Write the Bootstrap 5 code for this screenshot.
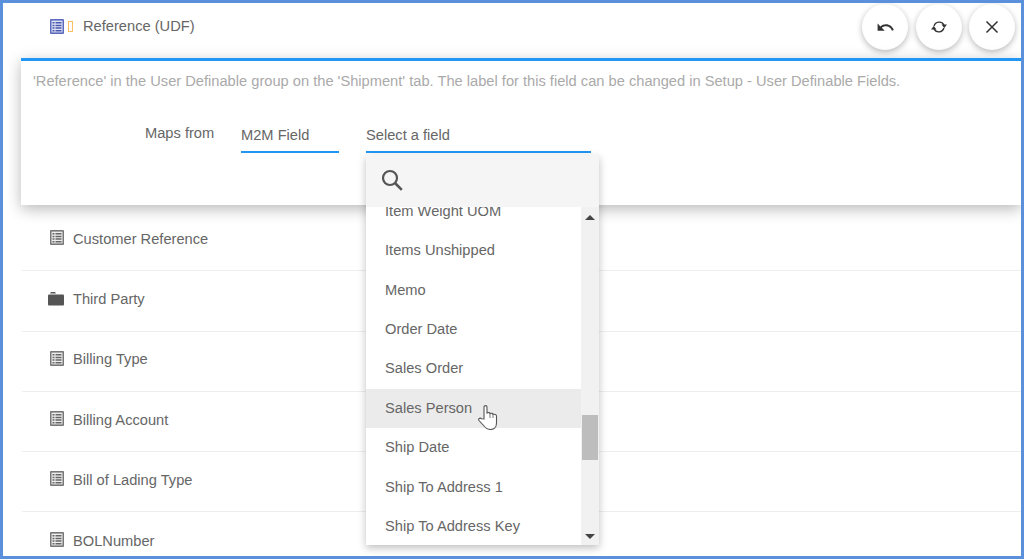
<!DOCTYPE html>
<html lang="en"><head><meta charset="utf-8"><title>Field mapping</title>
<link href="https://cdn.jsdelivr.net/npm/bootstrap@5.3.0/dist/css/bootstrap.min.css" rel="stylesheet">
<style>
html,body{height:100%;margin:0}
body{font-family:"Liberation Sans",Arial,sans-serif;font-size:14.67px;color:#666;background:#fff}
.frame{height:559px;border:3px solid #5b90dc;position:relative;overflow:hidden}
.head-row{height:55px;padding-left:47px;padding-right:6px}
.head-label{margin-top:-9px}
.ico{width:14px;height:15px;flex:none;margin-top:-2px}
.ico-main{margin-right:2px;margin-top:-9px}
.tiny-box{width:5px;height:11px;border:1px solid #fbbf63;margin:-8px 10px 0 2px;flex:none}
.round-btn{width:46px;height:46px;border-radius:50%;background:#fff;box-shadow:0 2px 6px rgba(0,0,0,.28);border:0;padding:0;margin-left:7.500px;margin-top:-7px}
.detail{margin-left:18px;height:147px;border-top:3px solid #2196f3;background:#fff;box-shadow:0 4px 14px rgba(0,0,0,.28);padding:9px 12px;position:relative;z-index:2;color:#aaa}
.map-line{margin-top:30px;margin-left:112px;color:#666}
.maps-lbl{width:96px}
.fld-a{width:98px;height:31px;border-bottom:2px solid #2196f3;margin-right:27px;padding-top:2px}
.fld-b{width:225px;height:31px;border-bottom:2px solid #2196f3;padding-top:2px}
.rows{margin-left:19px;margin-top:6px}
.row-item{height:60.3px;border-bottom:1px solid #eee;padding-left:28px;padding-bottom:4px;gap:9px}
.row-item:last-child{border-bottom:0}
.ico-folder{width:16px;height:15px;margin-left:-2px;margin-right:0;margin-top:0}
.picker{position:absolute;left:363px;top:152px;width:233px;height:390px;background:#fff;box-shadow:0 3px 8px rgba(0,0,0,.25);z-index:3;overflow:hidden}
.pick-search{height:52px;background:#f5f5f5;padding-left:15px;position:relative;z-index:1}
.pick-search svg{margin-top:-3px}
.pick-body{height:338px}
.pick-list{flex:1;overflow:hidden}
.pick-item{height:39.45px;padding-left:19px;padding-bottom:1px;flex:none}
.pick-item:first-child{margin-top:-15.5px}
.pick-item.hot{background:#ebebeb}
.bar{width:18px;background:#f1f1f1;position:relative;flex:none}
.arr{position:absolute;left:4px;width:0;height:0;border-left:5px solid transparent;border-right:5px solid transparent}
.arr-up{top:8px;border-bottom:5px solid #444}
.arr-dn{bottom:6px;border-top:5px solid #444}
.thumb{position:absolute;left:1px;width:16px;top:208px;height:45px;background:#bdbdbd}
.hand{position:absolute;left:475px;top:402px;width:20px;height:25px;z-index:4}
</style></head><body>
<div class="frame">
 <div class="head-row d-flex align-items-center">
  <svg class="ico ico-main" viewBox="0 0 14 14" preserveAspectRatio="none"><rect width="14" height="14" rx="1" fill="#5c6bc0"/><rect x="1.500" y="1.500" width="11" height="11" fill="#dfe3f5"/><path d="M2.500 3.500h2M2.500 6h2M2.500 8.500h2M2.500 11h2M5.500 3.500h6M5.500 6h6M5.500 8.500h6M5.500 11h6" stroke="#4a58ad" stroke-width="1.400"/></svg>
  <span class="tiny-box"></span>
  <span class="head-label">Reference (UDF)</span>
  <div class="ms-auto d-flex">
   <button class="round-btn d-flex align-items-center justify-content-center" aria-label="Undo"><svg width="19" height="19" viewBox="0 0 24 24"><path d="M12.500 8c-2.650 0-5.050.99-6.900 2.600L2 7v9h9l-3.620-3.620c1.390-1.160 3.160-1.880 5.120-1.880 3.540 0 6.550 2.310 7.600 5.500l2.370-.78C21.080 11.030 17.150 8 12.500 8z" fill="#333"/></svg></button>
   <button class="round-btn d-flex align-items-center justify-content-center" aria-label="Refresh"><svg width="16" height="16" viewBox="0 0 16 16"><g fill="none" stroke="#333" stroke-width="1.400"><path d="M3.100 7A5.300 5.300 0 0 1 12.900 6"/><path d="M12.900 9A5.300 5.300 0 0 1 3.100 10"/></g><path d="M10.500 5.500H16L13.250 9zM0 10.500H5.500L2.750 7z" fill="#333"/></svg></button>
   <button class="round-btn d-flex align-items-center justify-content-center" aria-label="Close"><svg width="14" height="14" viewBox="0 0 14 14" stroke="#333" stroke-width="1.500"><path d="M1.500 1.500l11 11M12.500 1.500l-11 11"/></svg></button>
  </div>
 </div>
 <div class="detail">
  <div>'Reference' in the User Definable group on the 'Shipment' tab. The label for this field can be changed in Setup - User Definable Fields.</div>
  <div class="map-line d-flex">
   <div class="maps-lbl">Maps from</div>
   <div class="fld-a">M2M Field</div>
   <div class="fld-b">Select a field</div>
  </div>
 </div>
 <div class="rows">
  <div class="row-item d-flex align-items-center"><svg class="ico" viewBox="0 0 14 14" preserveAspectRatio="none"><rect width="14" height="14" rx="1" fill="#777"/><rect x="1.500" y="1.500" width="11" height="11" fill="#eee"/><path d="M2.500 3.500h2M2.500 6h2M2.500 8.500h2M2.500 11h2M5.500 3.500h6M5.500 6h6M5.500 8.500h6M5.500 11h6" stroke="#666" stroke-width="1.400"/></svg><span>Customer Reference</span></div>
  <div class="row-item d-flex align-items-center"><svg class="ico ico-folder" viewBox="0 0 16 15"><path d="M2 2.500 3 1h4l1 1.500z" fill="#555"/><rect y="3.500" width="16" height="11" rx="1" fill="#555"/></svg><span>Third Party</span></div>
  <div class="row-item d-flex align-items-center"><svg class="ico" viewBox="0 0 14 14" preserveAspectRatio="none"><rect width="14" height="14" rx="1" fill="#777"/><rect x="1.500" y="1.500" width="11" height="11" fill="#eee"/><path d="M2.500 3.500h2M2.500 6h2M2.500 8.500h2M2.500 11h2M5.500 3.500h6M5.500 6h6M5.500 8.500h6M5.500 11h6" stroke="#666" stroke-width="1.400"/></svg><span>Billing Type</span></div>
  <div class="row-item d-flex align-items-center"><svg class="ico" viewBox="0 0 14 14" preserveAspectRatio="none"><rect width="14" height="14" rx="1" fill="#777"/><rect x="1.500" y="1.500" width="11" height="11" fill="#eee"/><path d="M2.500 3.500h2M2.500 6h2M2.500 8.500h2M2.500 11h2M5.500 3.500h6M5.500 6h6M5.500 8.500h6M5.500 11h6" stroke="#666" stroke-width="1.400"/></svg><span>Billing Account</span></div>
  <div class="row-item d-flex align-items-center"><svg class="ico" viewBox="0 0 14 14" preserveAspectRatio="none"><rect width="14" height="14" rx="1" fill="#777"/><rect x="1.500" y="1.500" width="11" height="11" fill="#eee"/><path d="M2.500 3.500h2M2.500 6h2M2.500 8.500h2M2.500 11h2M5.500 3.500h6M5.500 6h6M5.500 8.500h6M5.500 11h6" stroke="#666" stroke-width="1.400"/></svg><span>Bill of Lading Type</span></div>
  <div class="row-item d-flex align-items-center"><svg class="ico" viewBox="0 0 14 14" preserveAspectRatio="none"><rect width="14" height="14" rx="1" fill="#777"/><rect x="1.500" y="1.500" width="11" height="11" fill="#eee"/><path d="M2.500 3.500h2M2.500 6h2M2.500 8.500h2M2.500 11h2M5.500 3.500h6M5.500 6h6M5.500 8.500h6M5.500 11h6" stroke="#666" stroke-width="1.400"/></svg><span>BOLNumber</span></div>
 </div>
 <div class="picker">
  <div class="pick-search d-flex align-items-center"><svg width="22" height="22" viewBox="0 0 22 22" fill="none" stroke="#555" stroke-width="2.200"><circle cx="9" cy="9" r="7"/><path d="M14 14 20.800 20.800" stroke-width="2.600"/></svg></div>
  <div class="pick-body d-flex">
   <div class="pick-list">
    <div class="pick-item d-flex align-items-center">Item Weight UOM</div>
    <div class="pick-item d-flex align-items-center">Items Unshipped</div>
    <div class="pick-item d-flex align-items-center">Memo</div>
    <div class="pick-item d-flex align-items-center">Order Date</div>
    <div class="pick-item d-flex align-items-center">Sales Order</div>
    <div class="pick-item hot d-flex align-items-center">Sales Person</div>
    <div class="pick-item d-flex align-items-center">Ship Date</div>
    <div class="pick-item d-flex align-items-center">Ship To Address 1</div>
    <div class="pick-item d-flex align-items-center">Ship To Address Key</div>
   </div>
   <div class="bar"><span class="arr arr-up"></span><span class="thumb"></span><span class="arr arr-dn"></span></div>
  </div>
 </div>
 <svg class="hand" viewBox="0 0 20 25"><path d="M6 14V2c0-1.800 3-1.800 3 0V8c1.500-.8 3-.4 3 .6 1.500-.6 3-.2 3 .8 1.500-.4 3.500 0 3.500 1.500V18c0 4-2.500 6.500-6 6.500-3 0-5-1.500-6.500-3.500L1 15.500c-1.200-1.800 1-3 2.500-1.800z" fill="#fff" stroke="#555" stroke-width="1.100"/><path d="M12 8.600V13M15 9.400V13" stroke="#555" stroke-width=".8" fill="none"/></svg>
</div>
<script src="https://cdn.jsdelivr.net/npm/bootstrap@5.3.0/dist/js/bootstrap.bundle.min.js"></script>
</body></html>
